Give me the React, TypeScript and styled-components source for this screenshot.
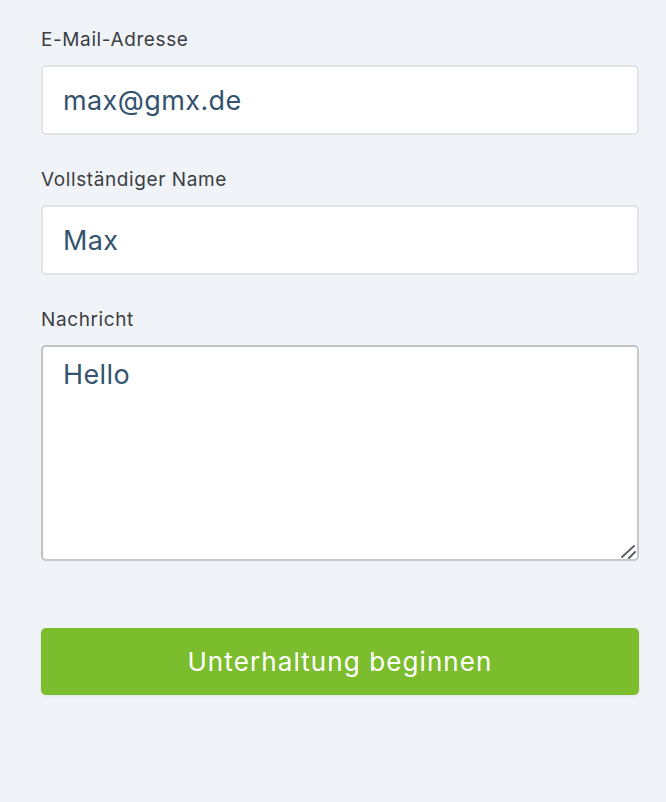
import React from "react";
import styled, { createGlobalStyle } from "styled-components";

const GlobalStyle = createGlobalStyle`
  html, body {
    margin: 0;
    padding: 0;
    background: #f0f3f7;
  }
  body {
    font-family: Inter, "Noto Sans", sans-serif;
  }
`;

const Grip = () => (
  <GripIcon width="16" height="16" viewBox="0 0 16 16">
    <line x1="2" y1="14" x2="14" y2="3" />
    <line x1="9" y1="15" x2="15" y2="9" />
  </GripIcon>
);

const App = () => {
  return (
    <>
      <GlobalStyle />
      <Page>
        <Form onSubmit={(e) => e.preventDefault()}>
          <Field>
            <Label>E-Mail-Adresse</Label>
            <Input defaultValue="max@gmx.de" />
          </Field>
          <Field>
            <Label>Vollständiger Name</Label>
            <Input defaultValue="Max" />
          </Field>
          <Field>
            <Label>Nachricht</Label>
            <AreaWrap>
              <TextArea defaultValue="Hello" />
              <Grip />
            </AreaWrap>
          </Field>
          <Button type="submit">Unterhaltung beginnen</Button>
        </Form>
      </Page>
    </>
  );
};

export default App;

const Page = styled.div`
  width: 666px;
  height: 802px;
  box-sizing: border-box;
  padding: 30px 27px 0 41px;
  background: #f0f3f7;
`;

const Form = styled.form`
  display: flex;
  flex-direction: column;
  width: 598px;
`;

const Field = styled.div`
  display: flex;
  flex-direction: column;
  margin-bottom: 35px;
`;

const Label = styled.label`
  font-size: 19px;
  line-height: 20px;
  letter-spacing: 0.6px;
  color: #3b3e43;
  margin-bottom: 15px;
`;

const Input = styled.input`
  box-sizing: border-box;
  width: 100%;
  height: 70px;
  padding: 0 20px;
  border: 2px solid #e1e3e6;
  border-radius: 5px;
  background: #fff;
  font-family: Inter, "Noto Sans", sans-serif;
  font-size: 27px;
  letter-spacing: 0.4px;
  color: #34536f;
  outline: none;
`;

const AreaWrap = styled.div`
  position: relative;
  display: flex;
`;

const TextArea = styled.textarea`
  box-sizing: border-box;
  width: 100%;
  height: 216px;
  padding: 11px 20px;
  border: 2px solid #c6c8cc;
  border-top-color: #bfc1c5;
  border-left-color: #bfc1c5;
  border-radius: 5px;
  background: #fff;
  font-family: Inter, "Noto Sans", sans-serif;
  font-size: 27px;
  line-height: 34px;
  letter-spacing: 0.4px;
  color: #34536f;
  outline: none;
  resize: none;
`;

const GripIcon = styled.svg`
  position: absolute;
  right: 3px;
  bottom: 2px;
  stroke: #5f6062;
  stroke-width: 2;
  stroke-linecap: round;
  pointer-events: none;
`;

const Button = styled.button`
  margin-top: 32px;
  height: 67px;
  width: 100%;
  border: none;
  border-radius: 5px;
  background: #7cbd2d;
  color: #fff;
  font-family: Inter, "Noto Sans", sans-serif;
  font-size: 26px;
  letter-spacing: 1.1px;
  box-shadow: 0 1px 3px rgba(0, 0, 0, 0.08);
  cursor: pointer;
`;
